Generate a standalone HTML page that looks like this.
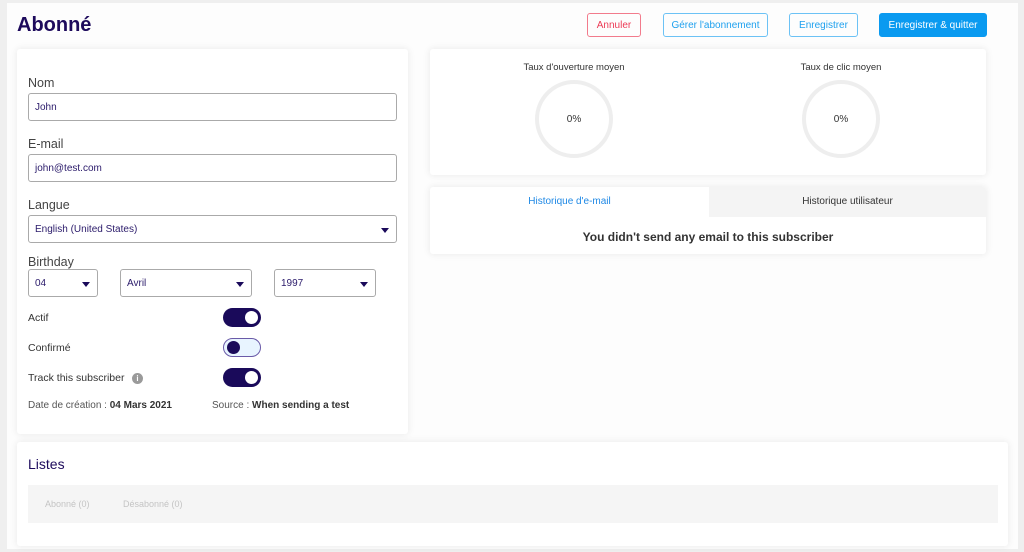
<!DOCTYPE html>
<html><head><meta charset="utf-8"><style>
*{box-sizing:border-box;margin:0;padding:0}
body{width:1024px;height:552px;background:#efefef;font-family:"Liberation Sans",sans-serif;position:relative;overflow:hidden}
.wrap{position:absolute;left:7px;top:3px;width:1011px;height:546px;background:#fdfdfd}
.a{position:absolute}
.card{position:absolute;background:#fff;border-radius:3px;box-shadow:0 0 8px rgba(0,0,0,.09)}
.lbl{position:absolute;left:28px;font-size:12.5px;color:#444}
.inp{position:absolute;left:28px;width:369px;height:28px;border:1px solid #aaa;border-radius:3px;font-size:10px;color:#2a1a6a;padding:8px 0 0 6px}
.sel{position:absolute;height:28px;border:1px solid #aaa;border-radius:3px;font-size:10px;color:#2a1a6a;padding:8px 0 0 6px}
.caret{position:absolute;right:7px;top:12px;width:0;height:0;border-left:4.5px solid transparent;border-right:4.5px solid transparent;border-top:5px solid #1a0a5a}
.tog{position:absolute;left:223px;width:38px;height:19px;border-radius:10px;background:#1a0a5a}
.tog i{position:absolute;right:3px;top:3px;width:13px;height:13px;border-radius:50%;background:#fff}
.tog.off{background:#e8f4ff;border:1px solid #6a5aa8}
.tog.off i{left:3px;top:2px;background:#1a0a5a}
.sm{position:absolute;font-size:10.5px;color:#333}
.btn{position:absolute;top:13px;height:24px;border:1px solid #6cc2f5;border-radius:3px;font-size:10px;color:#1ea0ee;display:flex;align-items:center;justify-content:center}
.ring{position:absolute;width:78px;height:78px;border:4px solid #eeeeee;border-radius:50%;text-align:center;line-height:72px;font-size:10px;color:#333}
</style></head><body>
<div class="wrap"></div>
<div class="a" style="left:17px;top:14px;font-size:20px;font-weight:bold;color:#1d0a5c">Abonné</div>

<div class="btn" style="left:587px;width:54px;border-color:#f27b8c;color:#ec3a55">Annuler</div>
<div class="btn" style="left:663px;width:105px">Gérer l'abonnement</div>
<div class="btn" style="left:789px;width:69px">Enregistrer</div>
<div class="btn" style="left:879px;width:108px;background:#0a9af0;border-color:#0a9af0;color:#fff">Enregistrer &amp; quitter</div>

<div class="card" style="left:17px;top:49px;width:391px;height:385px"></div>
<div class="lbl" style="top:76px">Nom</div>
<div class="inp" style="top:93px">John</div>
<div class="lbl" style="top:137px">E-mail</div>
<div class="inp" style="top:154px">john@test.com</div>
<div class="lbl" style="top:198px">Langue</div>
<div class="inp" style="top:215px">English (United States)<span class="caret" style="right:7px"></span></div>
<div class="lbl" style="top:255px">Birthday</div>
<div class="sel" style="left:28px;top:269px;width:70px">04<span class="caret"></span></div>
<div class="sel" style="left:120px;top:269px;width:132px">Avril<span class="caret"></span></div>
<div class="sel" style="left:274px;top:269px;width:102px">1997<span class="caret"></span></div>

<div class="sm" style="left:28px;top:312px">Actif</div>
<div class="tog" style="top:308px"><i></i></div>
<div class="sm" style="left:28px;top:342px">Confirmé</div>
<div class="tog off" style="top:338px"><i></i></div>
<div class="sm" style="left:28px;top:372px">Track this subscriber</div>
<div class="a" style="left:132px;top:373px;width:11px;height:11px;border-radius:50%;background:#9a9a9a;color:#fff;font-size:8px;font-weight:bold;text-align:center;line-height:11px">i</div>
<div class="tog" style="top:368px"><i></i></div>
<div class="sm" style="left:28px;top:400px;font-size:10px;color:#555">Date de création : <b style="color:#333">04 Mars 2021</b></div>
<div class="sm" style="left:212px;top:400px;font-size:10px;color:#555">Source : <b style="color:#333">When sending a test</b></div>

<div class="card" style="left:430px;top:49px;width:556px;height:126px"></div>
<div class="sm" style="left:474px;top:62px;width:200px;text-align:center;font-size:9.5px">Taux d'ouverture moyen</div>
<div class="sm" style="left:741px;top:62px;width:200px;text-align:center;font-size:9.5px">Taux de clic moyen</div>
<div class="ring" style="left:535px;top:80px">0%</div>
<div class="ring" style="left:802px;top:80px">0%</div>

<div class="card" style="left:430px;top:187px;width:556px;height:67px;overflow:hidden">
<div class="a" style="left:279px;top:0;width:277px;height:30px;background:#f4f4f4"></div>
<div class="sm" style="left:0;top:9px;width:279px;text-align:center;font-size:10px;color:#1e88e5">Historique d'e-mail</div>
<div class="sm" style="left:279px;top:9px;width:277px;text-align:center;font-size:10px">Historique utilisateur</div>
<div class="a" style="left:0;top:43px;width:556px;text-align:center;font-size:12px;font-weight:bold;color:#333">You didn't send any email to this subscriber</div>
</div>

<div class="card" style="left:17px;top:442px;width:991px;height:104px"></div>
<div class="a" style="left:28px;top:456px;font-size:14px;color:#1d0a5c">Listes</div>
<div class="a" style="left:28px;top:485px;width:970px;height:38px;background:#f5f5f5"></div>
<div class="sm" style="left:45px;top:499px;font-size:9px;color:#c4c4c4">Abonné (0)</div>
<div class="sm" style="left:123px;top:499px;font-size:9px;color:#c4c4c4">Désabonné (0)</div>
</body></html>
